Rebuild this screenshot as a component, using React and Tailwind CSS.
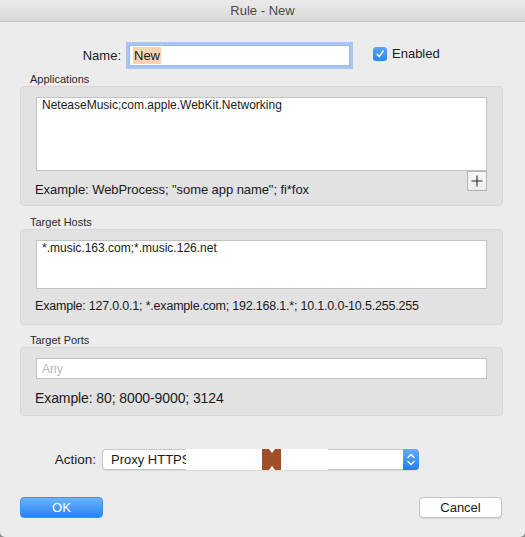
import React from "react";

function Chevrons() {
  return (
    <svg width="8" height="13" viewBox="0 0 8 13" fill="none">
      <path d="M1 4.5 L4 1.5 L7 4.5" stroke="white" strokeWidth="1.4" strokeLinecap="round" strokeLinejoin="round" />
      <path d="M1 8.5 L4 11.5 L7 8.5" stroke="white" strokeWidth="1.4" strokeLinecap="round" strokeLinejoin="round" />
    </svg>
  );
}

export default function App() {
  return (
    <div className="w-[525px] h-[537px] bg-[#8c8c8c] font-['Liberation_Sans',Arial,sans-serif] text-[13px] text-[#1a1a1a]">
      <div className="w-[525px] h-[537px] bg-[#ececec] rounded-b-[5px] flex flex-col overflow-hidden">
        {/* Title bar */}
        <div className="h-[22px] shrink-0 border-b border-[#c4c4c4] bg-gradient-to-b from-[#ebebeb] to-[#d9d9d9] flex items-center justify-center text-[13px] text-[#4a4a4a]">
          Rule - New
        </div>

        <div className="flex flex-col pl-[20px] pr-[22px]">
          {/* Name row */}
          <div className="mt-[23px] h-[21px] flex items-center">
            <div className="w-[101px] text-right leading-[16px]">Name:</div>
            <div className="ml-[8px] w-[221px] h-[21px] bg-white border border-[#9bb9e3] shadow-[0_0_0_3px_#a7c6f1] flex items-center pl-[3px]">
              <span className="bg-[#fbd3ae] leading-[17px] px-[1px]">New</span>
            </div>
            <div className="ml-[23px] flex items-center -mt-[3px]">
              <div className="w-[14px] h-[14px] rounded-[3px] bg-gradient-to-b from-[#5aa6f7] to-[#2a84f1] flex items-center justify-center">
                <svg width="10" height="10" viewBox="0 0 10 10" fill="none">
                  <path d="M2 5.3 L4.2 7.6 L8.2 2" stroke="white" strokeWidth="1.5" strokeLinecap="round" strokeLinejoin="round" />
                </svg>
              </div>
              <span className="ml-[5px] leading-[16px]">Enabled</span>
            </div>
          </div>

          {/* Applications */}
          <div className="mt-[6px] pl-[10px] h-[14px] text-[11px] leading-[14px] text-[#2a2a2a]">Applications</div>
          <div className="w-[483px] border border-[#d8d8d8] bg-[#e2e2e2] rounded-[4px] pt-[10px] pl-[15px] pr-[15px] pb-[7px] flex flex-col">
            <div className="h-[74px] bg-white border border-[#c2c2c2] pl-[5px] text-[12px] leading-[15px]">
              NeteaseMusic;com.apple.WebKit.Networking
            </div>
            <div className="flex justify-between items-start h-[27px]">
              <div className="pt-[11px] leading-[16px] -ml-[1px] tracking-[-0.07px]">Example: WebProcess; "some app name"; fi*fox</div>
              <div className="w-[20px] h-[20px] border border-[#b5b5b5] bg-gradient-to-b from-[#f8f8f8] to-[#ececec] flex items-center justify-center">
                <svg width="12" height="12" viewBox="0 0 12 12">
                  <path d="M6 0.5 V11.5 M0.5 6 H11.5" stroke="#2a2a2a" strokeWidth="1.1" />
                </svg>
              </div>
            </div>
          </div>

          {/* Target Hosts */}
          <div className="mt-[9px] pl-[10px] h-[14px] text-[11px] leading-[14px] text-[#2a2a2a]">Target Hosts</div>
          <div className="w-[483px] border border-[#d8d8d8] bg-[#e2e2e2] rounded-[4px] pt-[10px] pl-[15px] pr-[15px] pb-[10px] flex flex-col">
            <div className="h-[49px] bg-white border border-[#c2c2c2] pl-[5px] text-[12px] leading-[15px]">
              *.music.163.com;*.music.126.net
            </div>
            <div className="mt-[9px] leading-[16px] -ml-[1px] text-[12.5px] tracking-[-0.2px]">Example: 127.0.0.1; *.example.com; 192.168.1.*; 10.1.0.0-10.5.255.255</div>
          </div>

          {/* Target Ports */}
          <div className="mt-[8px] pl-[10px] h-[14px] text-[11px] leading-[14px] text-[#2a2a2a]">Target Ports</div>
          <div className="w-[483px] border border-[#d8d8d8] bg-[#e2e2e2] rounded-[4px] pt-[10px] pl-[15px] pr-[15px] pb-[9px] flex flex-col">
            <div className="h-[21px] bg-white border border-[#c2c2c2] pl-[5px] flex items-center text-[12px] text-[#b8b8b8]">
              Any
            </div>
            <div className="mt-[11px] leading-[16px] -ml-[1px] text-[14px] tracking-[-0.1px]">Example: 80; 8000-9000; 3124</div>
          </div>

          {/* Action */}
          <div className="mt-[33px] h-[21px] flex items-center">
            <div className="w-[76px] text-right leading-[16px] text-[13.5px]">Action:</div>
            <div className="relative ml-[6px] w-[317px] h-[21px] bg-white rounded-[4px] border border-[#c6c6c6] shadow-[0_1px_1px_rgba(0,0,0,0.08)] flex items-center overflow-visible">
              <span className="pl-[8px] leading-[16px]">Proxy HTTPS</span>
              <div className="ml-auto w-[16px] h-[21px] -my-[1px] -mr-[1px] rounded-r-[4px] bg-gradient-to-b from-[#62abf9] to-[#1c7ff0] flex items-center justify-center">
                <Chevrons />
              </div>
              {/* redaction overlay */}
              <div className="absolute left-[83px] -top-[1px] w-[142px] h-[21px] bg-white flex">
                <div className="ml-[76px] w-[19px] h-[21px] bg-[#9e5029] flex flex-col items-center justify-between">
                  <div className="w-0 h-0 border-l-[3px] border-r-[3px] border-t-[4px] border-l-transparent border-r-transparent border-t-white" />
                  <div className="w-0 h-0 border-l-[3px] border-r-[3px] border-b-[4px] border-l-transparent border-r-transparent border-b-white" />
                </div>
              </div>
            </div>
          </div>

          {/* Buttons */}
          <div className="mt-[27px] w-[482px] flex justify-between">
            <div className="w-[83px] h-[21px] rounded-[4px] bg-gradient-to-b from-[#6db3fa] to-[#1f83f2] border border-[#3d8fe8] flex items-center justify-center text-white text-[13px]">
              OK
            </div>
            <div className="w-[83px] h-[21px] rounded-[4px] bg-white border border-[#c4c4c4] shadow-[0_1px_1px_rgba(0,0,0,0.1)] flex items-center justify-center text-[13px]">
              Cancel
            </div>
          </div>
        </div>
      </div>
    </div>
  );
}
